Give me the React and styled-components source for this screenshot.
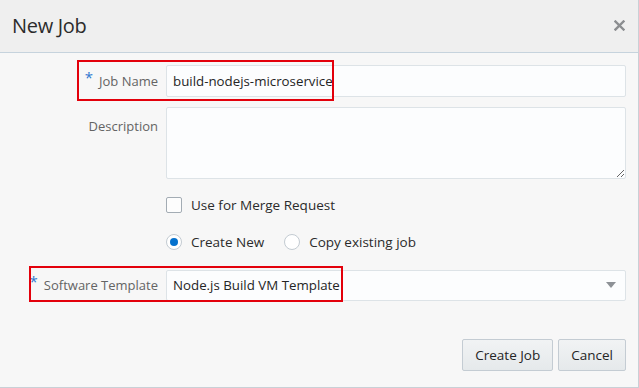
import styled, { createGlobalStyle } from 'styled-components'

const GlobalStyle = createGlobalStyle`
  html, body {
    margin: 0;
    padding: 0;
    background: #f7f7f7;
  }
  * {
    box-sizing: border-box;
  }
`

const font = `"Open Sans", "Noto Sans", "Liberation Sans", sans-serif`

export default function App() {
  return (
    <>
      <GlobalStyle />
      <Dialog>
        <Header>
          <Title>New Job</Title>
          <Close aria-label="Close">
            <svg width="11" height="11" viewBox="0 0 11 11">
              <path d="M1.5 1.5 L9.5 9.5 M9.5 1.5 L1.5 9.5" stroke="#8b8d90" strokeWidth="2.4" strokeLinecap="square" />
            </svg>
          </Close>
        </Header>

        <Body>
          <Row>
            <Highlight $left={77} $top={-5} $width={257} $height={41} />
            <Label>
              <Required>*</Required>Job Name
            </Label>
            <Input defaultValue="build-nodejs-microservice" />
          </Row>

          <Row $top={10}>
            <Label $align="start">Description</Label>
            <TextArea />
          </Row>

          <Row $top={15}>
            <span />
            <Options>
              <Option>
                <Checkbox />
                Use for Merge Request
              </Option>
            </Options>
          </Row>

          <Row $top={15}>
            <span />
            <Options>
              <Option>
                <Radio $checked />
                Create New
              </Option>
              <Option>
                <Radio />
                Copy existing job
              </Option>
            </Options>
          </Row>

          <Row $top={16}>
            <Highlight $left={29} $top={-3} $width={314} $height={36} />
            <Label>
              <Required>*</Required>Software Template
            </Label>
            <Select>
              <span>Node.js Build VM Template</span>
              <svg width="10" height="6" viewBox="0 0 10 6">
                <path d="M0 0 L10 0 L5 6 Z" fill="#8d9196" />
              </svg>
            </Select>
          </Row>
        </Body>

        <Footer>
          <Button>Create Job</Button>
          <Button>Cancel</Button>
        </Footer>
      </Dialog>
    </>
  )
}

const Dialog = styled.div`
  width: 639px;
  height: 388px;
  display: flex;
  flex-direction: column;
  background: #f7f7f7;
  border-right: 1px solid #c9d0d6;
  border-bottom: 1px solid #c9d0d6;
  font-family: ${font};
`

const Header = styled.div`
  height: 53px;
  flex: none;
  display: flex;
  align-items: center;
  justify-content: space-between;
  padding: 0 11px 0 12px;
  background: #efefef;
  border-bottom: 1px solid #c6d3dd;
`

const Title = styled.h1`
  margin: 0 0 2px;
  font-size: 20px;
  font-weight: 400;
  color: #2b2b2b;
  letter-spacing: -0.3px;
`

const Close = styled.span`
  display: flex;
  align-items: center;
  justify-content: center;
  width: 16px;
  height: 16px;
  margin-top: -1px;
`

const Body = styled.div`
  flex: 1;
  padding-top: 12px;
`

const Row = styled.div`
  position: relative;
  display: grid;
  grid-template-columns: 158px 460px;
  column-gap: 8px;
  align-items: center;
  margin-top: ${(p) => p.$top || 0}px;
`

const Highlight = styled.div`
  position: absolute;
  left: ${(p) => p.$left}px;
  top: ${(p) => p.$top}px;
  width: ${(p) => p.$width}px;
  height: ${(p) => p.$height}px;
  border: 2px solid #e3000b;
  pointer-events: none;
`

const Label = styled.label`
  align-self: ${(p) => p.$align || 'center'};
  margin-top: ${(p) => (p.$align === 'start' ? '3px' : '0')};
  height: 32px;
  line-height: 32px;
  text-align: right;
  font-size: 13px;
  color: #646464;
  white-space: nowrap;
`

const Required = styled.span`
  display: inline-block;
  margin-right: 6px;
  line-height: 0;
  color: #2f78d0;
  font-size: 15px;
  vertical-align: 3px;
`

const fieldBox = `
  width: 100%;
  background: #fcfdfe;
  border: 1px solid #dde3e7;
  border-radius: 2px;
  font-family: ${font};
  font-size: 13.3px;
  color: #252525;
`

const Input = styled.input`
  ${fieldBox}
  height: 32px;
  padding: 0 6px;
  outline: none;
`

const TextArea = styled.textarea`
  ${fieldBox}
  height: 72px;
  padding: 6px;
  resize: vertical;
  outline: none;
  display: block;
`

const Select = styled.div`
  ${fieldBox}
  height: 31px;
  padding: 0 9px 0 6px;
  display: flex;
  align-items: center;
  justify-content: space-between;
`

const Options = styled.div`
  display: flex;
  align-items: center;
  gap: 20px;
  height: 22px;
`

const Option = styled.label`
  display: flex;
  align-items: center;
  gap: 9px;
  font-size: 13.5px;
  color: #2b2b2b;
`

const Checkbox = styled.span`
  width: 16px;
  height: 16px;
  border: 1px solid #a3acb4;
  border-radius: 2px;
  background: #fdfdfd;
`

const Radio = styled.span`
  width: 16px;
  height: 16px;
  border-radius: 50%;
  border: 1px solid #c3cbd2;
  background: #fff;
  display: flex;
  align-items: center;
  justify-content: center;
  &::after {
    content: '';
    width: 8px;
    height: 8px;
    border-radius: 50%;
    background: #0572ce;
    display: ${(p) => (p.$checked ? 'block' : 'none')};
  }
`

const Footer = styled.div`
  display: flex;
  justify-content: flex-end;
  gap: 5px;
  padding: 0 12px 16px 0;
`

const Button = styled.button`
  height: 32px;
  padding: 0 12px;
  font-family: ${font};
  font-size: 13.5px;
  color: #252525;
  background: linear-gradient(#f1f3f4, #e5e9eb);
  border: 1px solid #c4ccd3;
  border-radius: 2px;
`
